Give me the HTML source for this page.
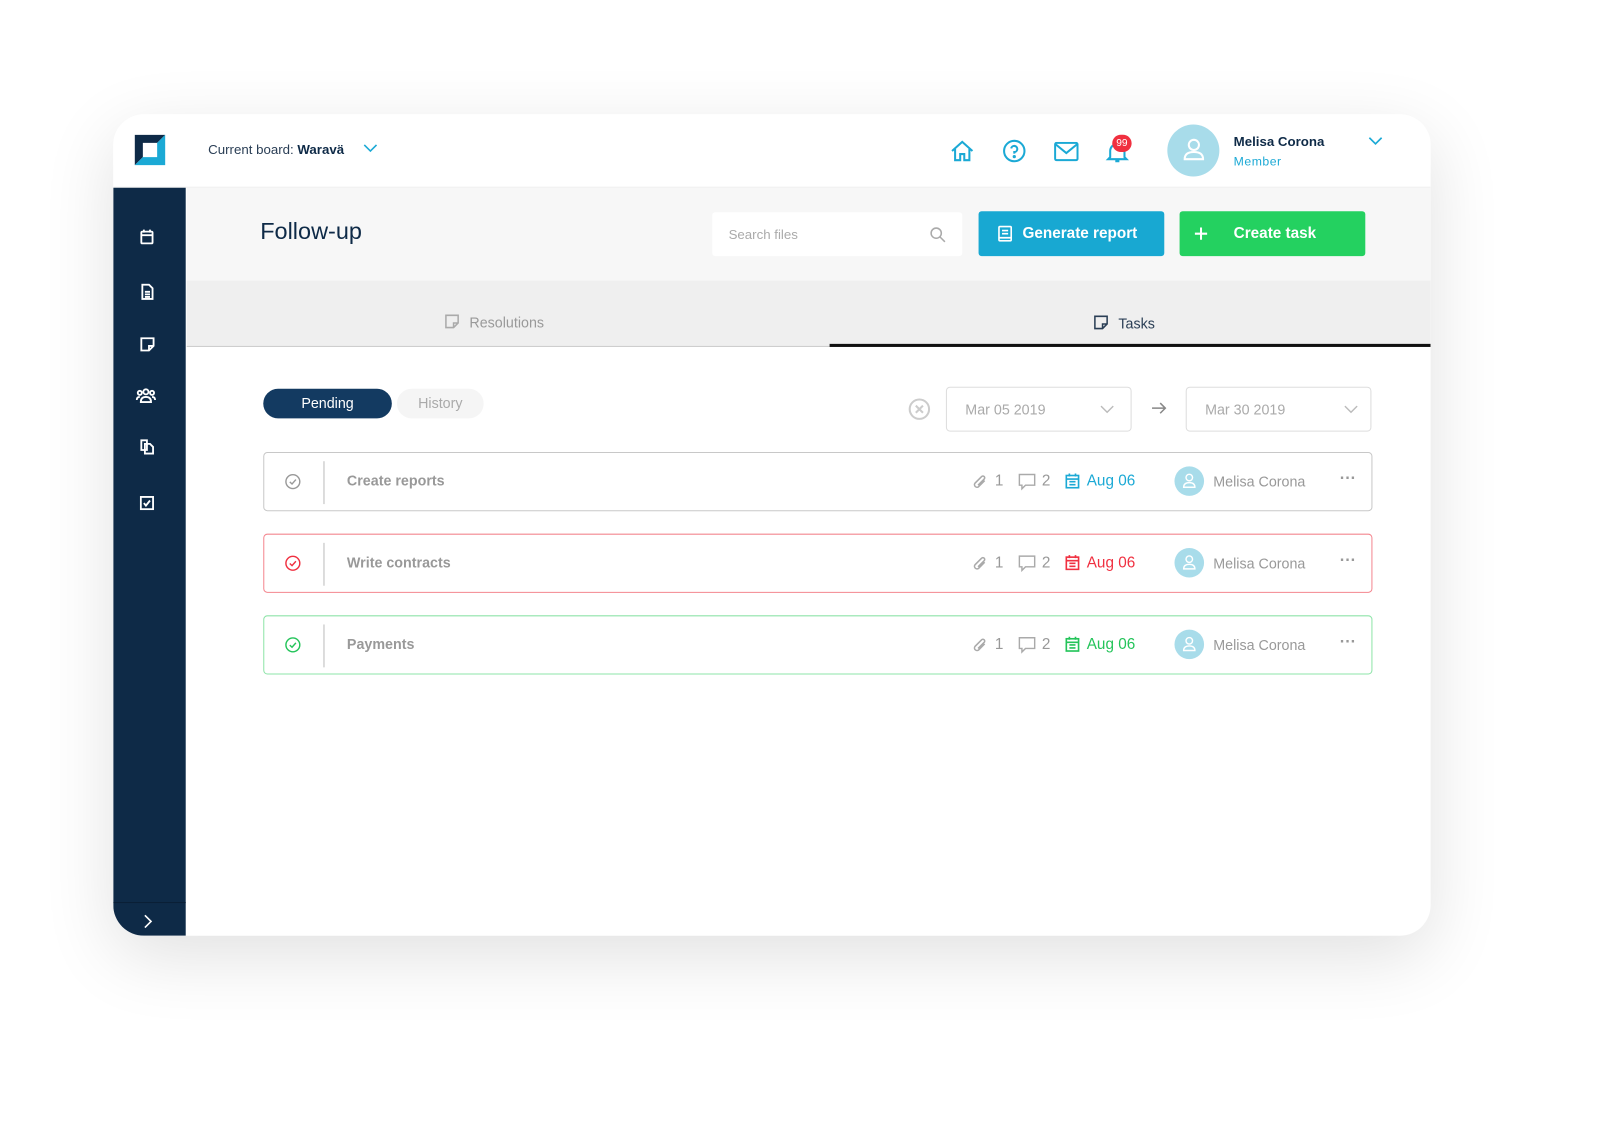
<!DOCTYPE html>
<html><head><meta charset="utf-8"><style>
*{box-sizing:border-box;margin:0;padding:0}
body{width:1600px;height:1105px;background:#fff;font-family:"Liberation Sans",sans-serif;position:relative;overflow:hidden}
.wrap{position:absolute;left:0;top:0;width:1600px;height:1105px;transform:scale(1.0204);transform-origin:0 0}
.a{position:absolute}
.card{left:111px;top:112px;width:1291px;height:805px;border-radius:30px;background:#fff;box-shadow:0 20px 70px rgba(0,0,0,.12);overflow:hidden}
.side{left:0;top:72px;width:71px;height:733px;background:#0e2a47}
.ic{stroke:#fff;fill:none;stroke-width:1.8}
.row{left:147px;width:1087px;height:58px;border:1.5px solid #c8c8c8;border-radius:4px;background:#fff}
.row .sep{left:58px;top:8px;width:1px;height:42px;background:#bbb}
.row .t{left:81px;top:19px;font-size:14px;font-weight:bold;color:#999}
.meta{top:19px;font-size:15px;color:#999}
.av{width:29px;height:29px;border-radius:50%;background:#a8dcea}
</style></head><body><div class="wrap">
<div class="a card">
 <div class="a" style="left:0;top:0;width:1291px;height:72px;background:#fff;border-bottom:1px solid #eee"></div>
 <svg class="a" style="left:21px;top:20px" width="30" height="30" viewBox="0 0 30 30"><path d="M0 0H30L22 8H8V22L0 30Z" fill="#0e2a47"/><path d="M30 0V30H0L8 22H22V8Z" fill="#1ba9d5"/></svg>
 <div class="a" style="left:93px;top:27px;font-size:13px;color:#2a3e55">Current board: <b style="color:#0e2a47">Waravä</b></div>
 <svg class="a" style="left:245px;top:28px" width="14" height="10"><path d="M1 2L7 8L13 2" stroke="#1ba9d5" fill="none" stroke-width="1.6"/></svg>
 <svg class="a" style="left:820px;top:24px" width="24" height="24" viewBox="0 0 24 24" fill="none" stroke="#1ba9d5" stroke-width="2"><path d="M2 12L12 3L22 12M5 10V21H10V15H14V21H19V10"/></svg>
 <svg class="a" style="left:871px;top:24px" width="24" height="24" viewBox="0 0 24 24" fill="none" stroke="#1ba9d5" stroke-width="2"><circle cx="12" cy="12" r="10"/><path d="M9 9.5A3 3 0 1 1 12 13V14.5"/><circle cx="12" cy="17.5" r=".6" fill="#1ba9d5"/></svg>
 <svg class="a" style="left:922px;top:27px" width="24" height="19" viewBox="0 0 24 19" fill="none" stroke="#1ba9d5" stroke-width="2"><rect x="1" y="1" width="22" height="17" rx="1.5"/><path d="M1 2L12 11L23 2"/></svg>
 <svg class="a" style="left:972px;top:25px" width="24" height="24" viewBox="0 0 24 24" fill="none" stroke="#1ba9d5" stroke-width="2"><path d="M5 17V11A7 7 0 0 1 19 11V17L21 19H3Z M10 21H14"/></svg>
 <div class="a" style="left:979px;top:20px;width:19px;height:17px;border-radius:9px;background:#f03040;color:#fff;font-size:10px;text-align:center;line-height:17px">99</div>
 <div class="a" style="left:1033px;top:10px;width:51px;height:51px;border-radius:50%;background:#a8dcea"></div>
 <svg class="a" style="left:1046px;top:22px" width="26" height="26" viewBox="0 0 26 26" fill="none" stroke="#fff" stroke-width="2"><circle cx="13" cy="8" r="5"/><path d="M4 22Q4 15 13 15Q22 15 22 22Z"/></svg>
 <div class="a" style="left:1098px;top:19px;font-size:13px;font-weight:bold;color:#0e2a47">Melisa Corona</div>
 <div class="a" style="left:1098px;top:39px;font-size:12px;color:#1ba9d5;letter-spacing:.5px">Member</div>
 <svg class="a" style="left:1230px;top:21px" width="14" height="10"><path d="M1 2L7 8L13 2" stroke="#1ba9d5" fill="none" stroke-width="1.6"/></svg>
 <div class="a side">
  <svg class="a" style="left:26px;top:40px" width="14" height="16" viewBox="0 0 14 16"><rect x="1.5" y="3" width="11" height="11.5" rx="1" class="ic"/><path d="M1.5 6.5H12.5M4 1V4M10 1V4" class="ic"/></svg>
  <svg class="a" style="left:27px;top:94px" width="13" height="16" viewBox="0 0 13 16"><path d="M1.5 1H8L11.5 4.5V15H1.5Z M4 8H9M4 10.5H9M4 13H9" class="ic"/></svg>
  <svg class="a" style="left:26px;top:146px" width="15" height="15" viewBox="0 0 15 15"><path d="M1.5 1.5H13.5V9L9 13.5H1.5Z M9 13.5V9H13.5" class="ic"/></svg>
  <svg class="a" style="left:22px;top:196px" width="20" height="16" viewBox="0 0 20 16"><circle cx="10" cy="4" r="2.5" class="ic" stroke-width="1.5"/><circle cx="4" cy="5" r="2" class="ic" stroke-width="1.5"/><circle cx="16" cy="5" r="2" class="ic" stroke-width="1.5"/><path d="M5 14Q5 9 10 9Q15 9 15 14Z M1 12Q1 9 4 9M19 12Q19 9 16 9" class="ic" stroke-width="1.5"/></svg>
  <svg class="a" style="left:26px;top:246px" width="15" height="16" viewBox="0 0 15 16"><path d="M1.5 1.5H7V11H1.5Z M5 5H10L13 8V14.5H5Z" class="ic"/></svg>
  <svg class="a" style="left:26px;top:302px" width="14" height="14" viewBox="0 0 14 14"><rect x="1" y="1" width="12" height="12" class="ic"/><path d="M4 7L6 9.5L10 4.5" class="ic"/></svg>
  <div class="a" style="left:0;top:700px;width:71px;height:1px;background:#0a1f36"></div>
  <svg class="a" style="left:29px;top:712px" width="10" height="14"><path d="M2 1L8 7L2 13" stroke="#fff" fill="none" stroke-width="1.6"/></svg>
 </div>
 <div class="a" style="left:72px;top:72px;width:1219px;height:91px;background:#f7f7f7"></div>
 <div class="a" style="left:144px;top:101px;font-size:23px;color:#0e2a47">Follow-up</div>
 <div class="a" style="left:587px;top:96px;width:245px;height:43px;background:#fff;border-radius:3px"></div>
 <div class="a" style="left:603px;top:110px;font-size:13px;color:#aaa">Search files</div>
 <svg class="a" style="left:800px;top:110px" width="16" height="16" viewBox="0 0 16 16" fill="none" stroke="#aaa" stroke-width="1.5"><circle cx="6.5" cy="6.5" r="5"/><path d="M10 10L15 15"/></svg>
 <div class="a" style="left:848px;top:95px;width:182px;height:44px;background:#18a8d2;border-radius:3px"></div>
 <svg class="a" style="left:867px;top:109px" width="14" height="16" viewBox="0 0 14 16" fill="none" stroke="#fff" stroke-width="1.6"><rect x="1" y="1" width="12" height="14" rx="1"/><path d="M4 5H10M4 8H10M1 12H13"/></svg>
 <div class="a" style="left:891px;top:108px;font-size:15px;font-weight:bold;color:#fff">Generate report</div>
 <div class="a" style="left:1045px;top:95px;width:182px;height:44px;background:#24d160;border-radius:3px"></div>
 <svg class="a" style="left:1059px;top:110px" width="14" height="14"><path d="M7 1V13M1 7H13" stroke="#fff" stroke-width="2"/></svg>
 <div class="a" style="left:1098px;top:108px;font-size:15px;font-weight:bold;color:#fff">Create task</div>
 <div class="a" style="left:72px;top:163px;width:1219px;height:65px;background:#efefef;border-bottom:1px solid #ccc"></div>
 <div class="a" style="left:702px;top:225px;width:589px;height:3px;background:#111"></div>
 <svg class="a" style="left:325px;top:196px" width="14" height="14" viewBox="0 0 14 14" fill="none" stroke="#aaa" stroke-width="1.5"><path d="M1 1H13V8.5L8.5 13H1Z M8.5 13V8.5H13"/></svg>
 <div class="a" style="left:349px;top:196px;font-size:14px;color:#999">Resolutions</div>
 <svg class="a" style="left:961px;top:197px" width="14" height="14" viewBox="0 0 14 14" fill="none" stroke="#2a3e55" stroke-width="1.5"><path d="M1 1H13V8.5L8.5 13H1Z M8.5 13V8.5H13"/></svg>
 <div class="a" style="left:985px;top:197px;font-size:14px;color:#2a3e55">Tasks</div>
 <div class="a" style="left:147px;top:269px;width:126px;height:29px;border-radius:15px;background:#133a61;color:#fff;font-size:14px;text-align:center;line-height:29px">Pending</div>
 <div class="a" style="left:278px;top:269px;width:85px;height:29px;border-radius:15px;background:#f5f5f5;color:#aaa;font-size:14px;text-align:center;line-height:29px">History</div>
 <svg class="a" style="left:779px;top:278px" width="22" height="22" viewBox="0 0 22 22" fill="none" stroke="#ccc" stroke-width="2"><circle cx="11" cy="11" r="9.5"/><path d="M7.5 7.5L14.5 14.5M14.5 7.5L7.5 14.5"/></svg>
 <div class="a" style="left:816px;top:267px;width:182px;height:44px;border:1px solid #ddd;border-radius:4px"></div>
 <div class="a" style="left:835px;top:281px;font-size:14px;color:#aaa">Mar 05 2019</div>
 <svg class="a" style="left:967px;top:284px" width="14" height="10"><path d="M1 2L7 8L13 2" stroke="#bbb" fill="none" stroke-width="1.4"/></svg>
 <svg class="a" style="left:1017px;top:281px" width="16" height="14" viewBox="0 0 16 14" fill="none" stroke="#888" stroke-width="1.5"><path d="M1 7H14M9 2L14 7L9 12"/></svg>
 <div class="a" style="left:1051px;top:267px;width:182px;height:44px;border:1px solid #ddd;border-radius:4px"></div>
 <div class="a" style="left:1070px;top:281px;font-size:14px;color:#aaa">Mar 30 2019</div>
 <svg class="a" style="left:1206px;top:284px" width="14" height="10"><path d="M1 2L7 8L13 2" stroke="#bbb" fill="none" stroke-width="1.4"/></svg>

 <div class="a row" style="top:331px">
  <svg class="a" style="left:20px;top:20px" width="16" height="16" viewBox="0 0 16 16" fill="none" stroke="#999" stroke-width="1.4"><circle cx="8" cy="8" r="6.8"/><path d="M5 8.2L7.2 10.3L11 6"/></svg>
  <div class="a sep"></div><div class="a t">Create reports</div>
  <svg class="a" style="left:694px;top:20px" width="15" height="17" viewBox="0 0 15 17" fill="none" stroke="#aaa" stroke-width="1.5"><path d="M12 7L6 13A2.5 2.5 0 0 1 2.5 9.5L9 3A1.7 1.7 0 0 1 11.5 5.5L5.5 11.5"/></svg>
  <div class="a meta" style="left:716px">1</div>
  <svg class="a" style="left:739px;top:20px" width="17" height="17" viewBox="0 0 17 17" fill="none" stroke="#aaa" stroke-width="1.4"><path d="M1 1H16V11.5H7L3.5 15V11.5H1Z"/></svg>
  <div class="a meta" style="left:762px">2</div>
  <svg class="a" style="left:785px;top:19px" width="14" height="16" viewBox="0 0 14 16" fill="none" stroke="#1ba9d5" stroke-width="1.6"><rect x="1" y="3" width="12" height="12"/><path d="M1 6.5H13M4 1V4M10 1V4M4 9H10M4 12H10"/></svg>
  <div class="a meta" style="left:806px;color:#1ba9d5">Aug 06</div>
  <div class="a av" style="left:892px;top:13px"></div>
  <svg class="a" style="left:899px;top:19px" width="15" height="16" viewBox="0 0 15 16" fill="none" stroke="#fff" stroke-width="1.4"><circle cx="7.5" cy="5" r="3.2"/><path d="M2 14.5Q2 10 7.5 10Q13 10 13 14.5Z"/></svg>
  <div class="a meta" style="left:930px;font-size:14px;top:20px">Melisa Corona</div>
  <div class="a" style="left:1054px;top:17px;font-size:16px;font-weight:bold;color:#999">···</div>
 </div>
 <div class="a row" style="top:411px;border-color:#f4868f">
  <svg class="a" style="left:20px;top:20px" width="16" height="16" viewBox="0 0 16 16" fill="none" stroke="#f03040" stroke-width="1.4"><circle cx="8" cy="8" r="6.8"/><path d="M5 8.2L7.2 10.3L11 6"/></svg>
  <div class="a sep"></div><div class="a t">Write contracts</div>
  <svg class="a" style="left:694px;top:20px" width="15" height="17" viewBox="0 0 15 17" fill="none" stroke="#aaa" stroke-width="1.5"><path d="M12 7L6 13A2.5 2.5 0 0 1 2.5 9.5L9 3A1.7 1.7 0 0 1 11.5 5.5L5.5 11.5"/></svg>
  <div class="a meta" style="left:716px">1</div>
  <svg class="a" style="left:739px;top:20px" width="17" height="17" viewBox="0 0 17 17" fill="none" stroke="#aaa" stroke-width="1.4"><path d="M1 1H16V11.5H7L3.5 15V11.5H1Z"/></svg>
  <div class="a meta" style="left:762px">2</div>
  <svg class="a" style="left:785px;top:19px" width="14" height="16" viewBox="0 0 14 16" fill="none" stroke="#f03040" stroke-width="1.6"><rect x="1" y="3" width="12" height="12"/><path d="M1 6.5H13M4 1V4M10 1V4M4 9H10M4 12H10"/></svg>
  <div class="a meta" style="left:806px;color:#f03040">Aug 06</div>
  <div class="a av" style="left:892px;top:13px"></div>
  <svg class="a" style="left:899px;top:19px" width="15" height="16" viewBox="0 0 15 16" fill="none" stroke="#fff" stroke-width="1.4"><circle cx="7.5" cy="5" r="3.2"/><path d="M2 14.5Q2 10 7.5 10Q13 10 13 14.5Z"/></svg>
  <div class="a meta" style="left:930px;font-size:14px;top:20px">Melisa Corona</div>
  <div class="a" style="left:1054px;top:17px;font-size:16px;font-weight:bold;color:#999">···</div>
 </div>
 <div class="a row" style="top:491px;border-color:#8ee4a8">
  <svg class="a" style="left:20px;top:20px" width="16" height="16" viewBox="0 0 16 16" fill="none" stroke="#24c45a" stroke-width="1.4"><circle cx="8" cy="8" r="6.8"/><path d="M5 8.2L7.2 10.3L11 6"/></svg>
  <div class="a sep"></div><div class="a t">Payments</div>
  <svg class="a" style="left:694px;top:20px" width="15" height="17" viewBox="0 0 15 17" fill="none" stroke="#aaa" stroke-width="1.5"><path d="M12 7L6 13A2.5 2.5 0 0 1 2.5 9.5L9 3A1.7 1.7 0 0 1 11.5 5.5L5.5 11.5"/></svg>
  <div class="a meta" style="left:716px">1</div>
  <svg class="a" style="left:739px;top:20px" width="17" height="17" viewBox="0 0 17 17" fill="none" stroke="#aaa" stroke-width="1.4"><path d="M1 1H16V11.5H7L3.5 15V11.5H1Z"/></svg>
  <div class="a meta" style="left:762px">2</div>
  <svg class="a" style="left:785px;top:19px" width="14" height="16" viewBox="0 0 14 16" fill="none" stroke="#24c45a" stroke-width="1.6"><rect x="1" y="3" width="12" height="12"/><path d="M1 6.5H13M4 1V4M10 1V4M4 9H10M4 12H10"/></svg>
  <div class="a meta" style="left:806px;color:#24c45a">Aug 06</div>
  <div class="a av" style="left:892px;top:13px"></div>
  <svg class="a" style="left:899px;top:19px" width="15" height="16" viewBox="0 0 15 16" fill="none" stroke="#fff" stroke-width="1.4"><circle cx="7.5" cy="5" r="3.2"/><path d="M2 14.5Q2 10 7.5 10Q13 10 13 14.5Z"/></svg>
  <div class="a meta" style="left:930px;font-size:14px;top:20px">Melisa Corona</div>
  <div class="a" style="left:1054px;top:17px;font-size:16px;font-weight:bold;color:#999">···</div>
 </div>
</div>
</div></body></html>
